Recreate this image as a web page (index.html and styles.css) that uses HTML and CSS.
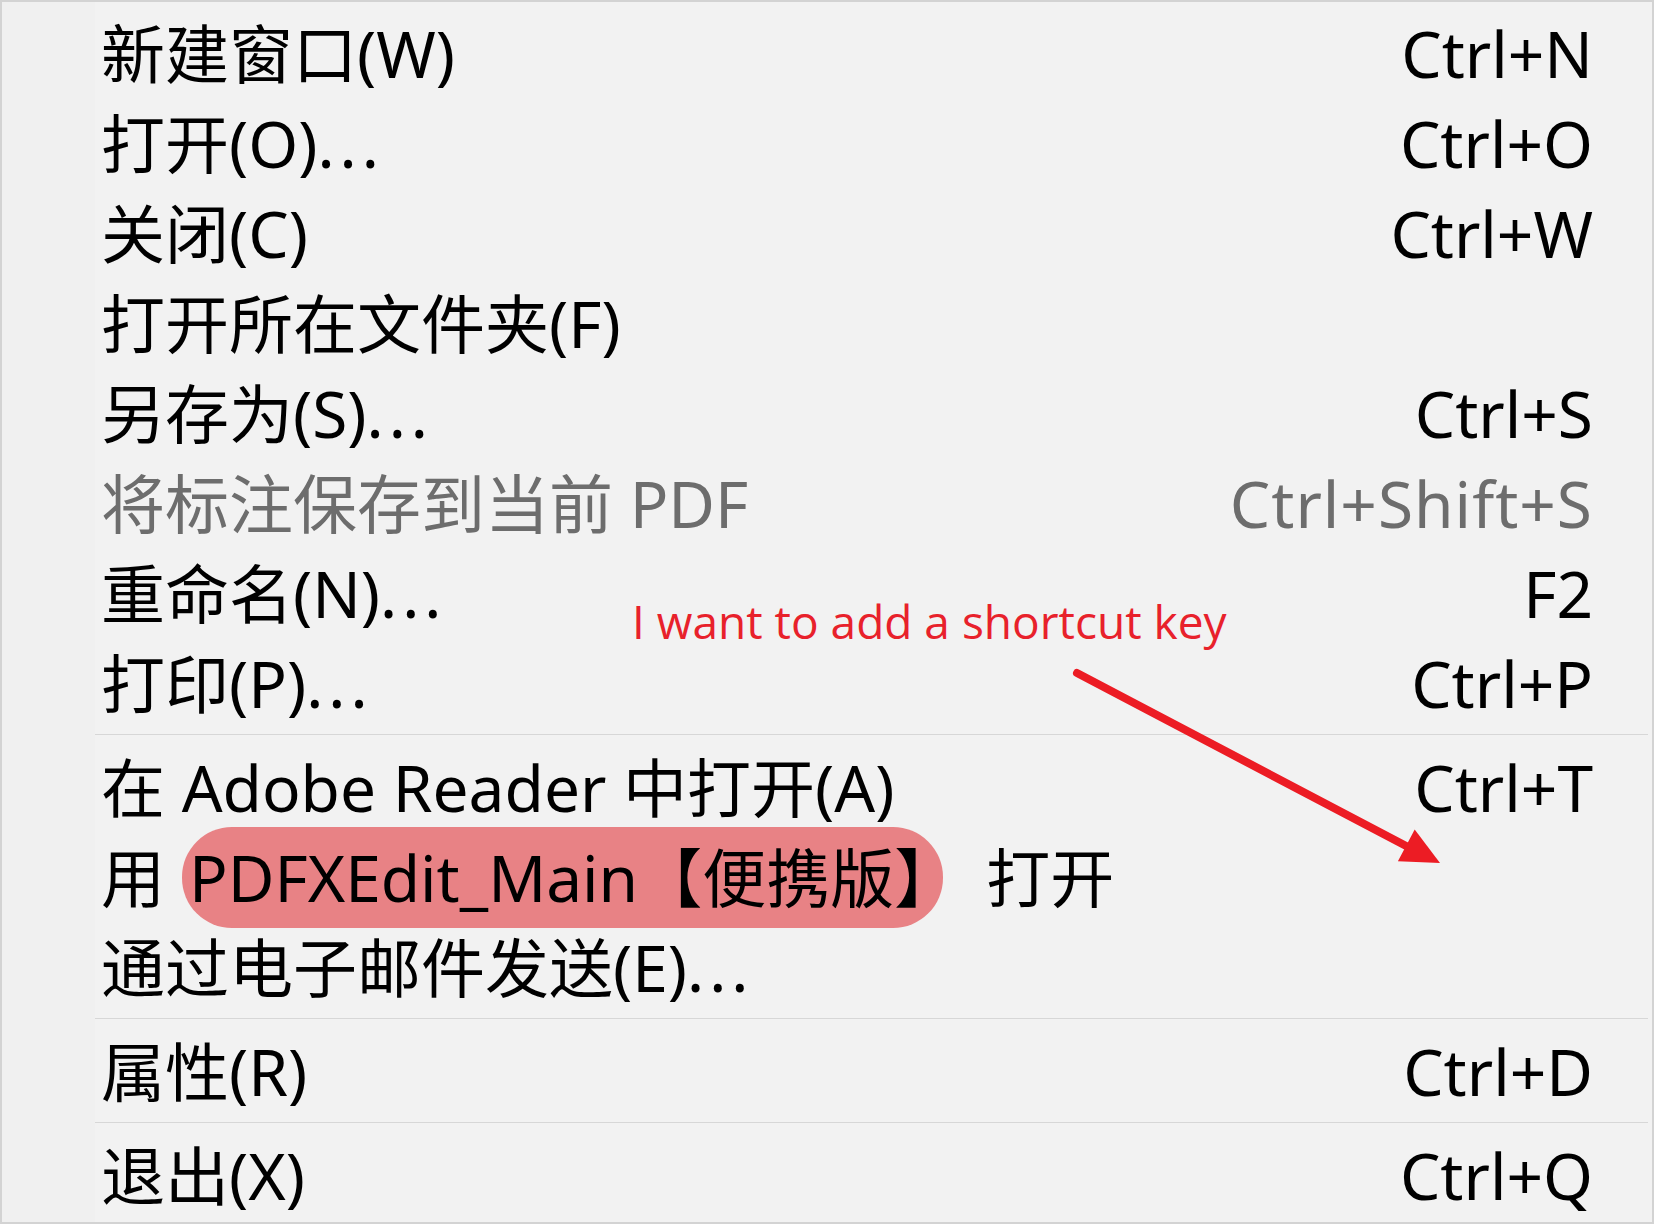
FILE: index.html
```html
<!DOCTYPE html>
<html lang="zh-CN">
<head>
    <meta charset="UTF-8">
    <title>文件菜单</title>
    <link rel="stylesheet" href="styles.css">
</head>
<body>
    <div class="menu">
        <div class="gutter"></div>
        <div class="items">
            <div class="item"><span class="label">新建窗口(W)</span><span class="key">Ctrl+N</span></div>
            <div class="item"><span class="label">打开(O)<span class="dots">...</span></span><span class="key">Ctrl+O</span></div>
            <div class="item"><span class="label">关闭(C)</span><span class="key">Ctrl+W</span></div>
            <div class="item"><span class="label">打开所在文件夹(F)</span><span class="key"></span></div>
            <div class="item"><span class="label">另存为(S)<span class="dots">...</span></span><span class="key">Ctrl+S</span></div>
            <div class="item disabled"><span class="label">将标注保存到当前 PDF</span><span class="key wide">Ctrl+Shift+S</span></div>
            <div class="item"><span class="label">重命名(N)<span class="dots">...</span></span><span class="key">F2</span></div>
            <div class="item"><span class="label">打印(P)<span class="dots">...</span></span><span class="key">Ctrl+P</span></div>
            <div class="separator"></div>
            <div class="item"><span class="label">在 Adobe Reader 中打开(A)</span><span class="key">Ctrl+T</span></div>
            <div class="item"><span class="label">用<span class="pill">PDFXEdit_Main【便携版<span class="tail">】</span></span><span class="after">打开</span></span><span class="key"></span></div>
            <div class="item"><span class="label">通过电子邮件发送(E)<span class="dots">...</span></span><span class="key"></span></div>
            <div class="separator"></div>
            <div class="item"><span class="label">属性(R)</span><span class="key">Ctrl+D</span></div>
            <div class="separator"></div>
            <div class="item"><span class="label">退出(X)</span><span class="key">Ctrl+Q</span></div>
        </div>

        <div class="note">I want to add a shortcut key</div>
        <svg class="arrow" width="1654" height="1224" viewBox="0 0 1654 1224">
            <line x1="1077" y1="673" x2="1410" y2="848" stroke="#ec1c24" stroke-width="8" stroke-linecap="round"/>
            <polygon points="1440,863 1414.7,829.5 1397.9,861.3" fill="#ec1c24"/>
        </svg>
    </div>
</body>
</html>
```

FILE: styles.css
```css
html, body {
    margin: 0;
    padding: 0;
}
body {
    background: #f2f2f2;
    font-family: "Noto Sans", "Noto Sans CJK SC", sans-serif;
}
.menu {
    position: relative;
    display: flex;
    width: 1654px;
    height: 1224px;
    box-sizing: border-box;
    border: 2px solid #d3d3d3;
    background: #f2f2f2;
    overflow: hidden;
}
.gutter {
    width: 93px;
    flex-shrink: 0;
    background: #f0f0f0;
}
.items {
    flex: 1;
    display: flex;
    flex-direction: column;
    padding: 7px 4px 0 0;
}
.item {
    display: flex;
    justify-content: space-between;
    align-items: center;
    height: 90px;
    padding: 0 55px 0 6px;
    font-size: 64px;
    line-height: 90px;
    color: #000;
    white-space: nowrap;
}
.item.disabled {
    color: #6d6d6d;
}
.dots {
    letter-spacing: 5px;
}
.key.wide {
    letter-spacing: 1px;
}
.separator {
    height: 1px;
    margin: 5px 0 8px;
    background: #d7d7d7;
}
.pill {
    margin-left: 17px;
    padding: 7px 0 7px 7px;
    background: #e88285;
    border-radius: 50px;
}
.pill .tail {
    margin-right: -15px;
}
.after {
    margin-left: 43px;
}
.note {
    position: absolute;
    left: 630px;
    top: 596px;
    font-family: "Open Sans", sans-serif;
    font-size: 46px;
    line-height: 46px;
    color: #e8212b;
    white-space: nowrap;
}
.arrow {
    position: absolute;
    left: -2px;
    top: -2px;
}
```
